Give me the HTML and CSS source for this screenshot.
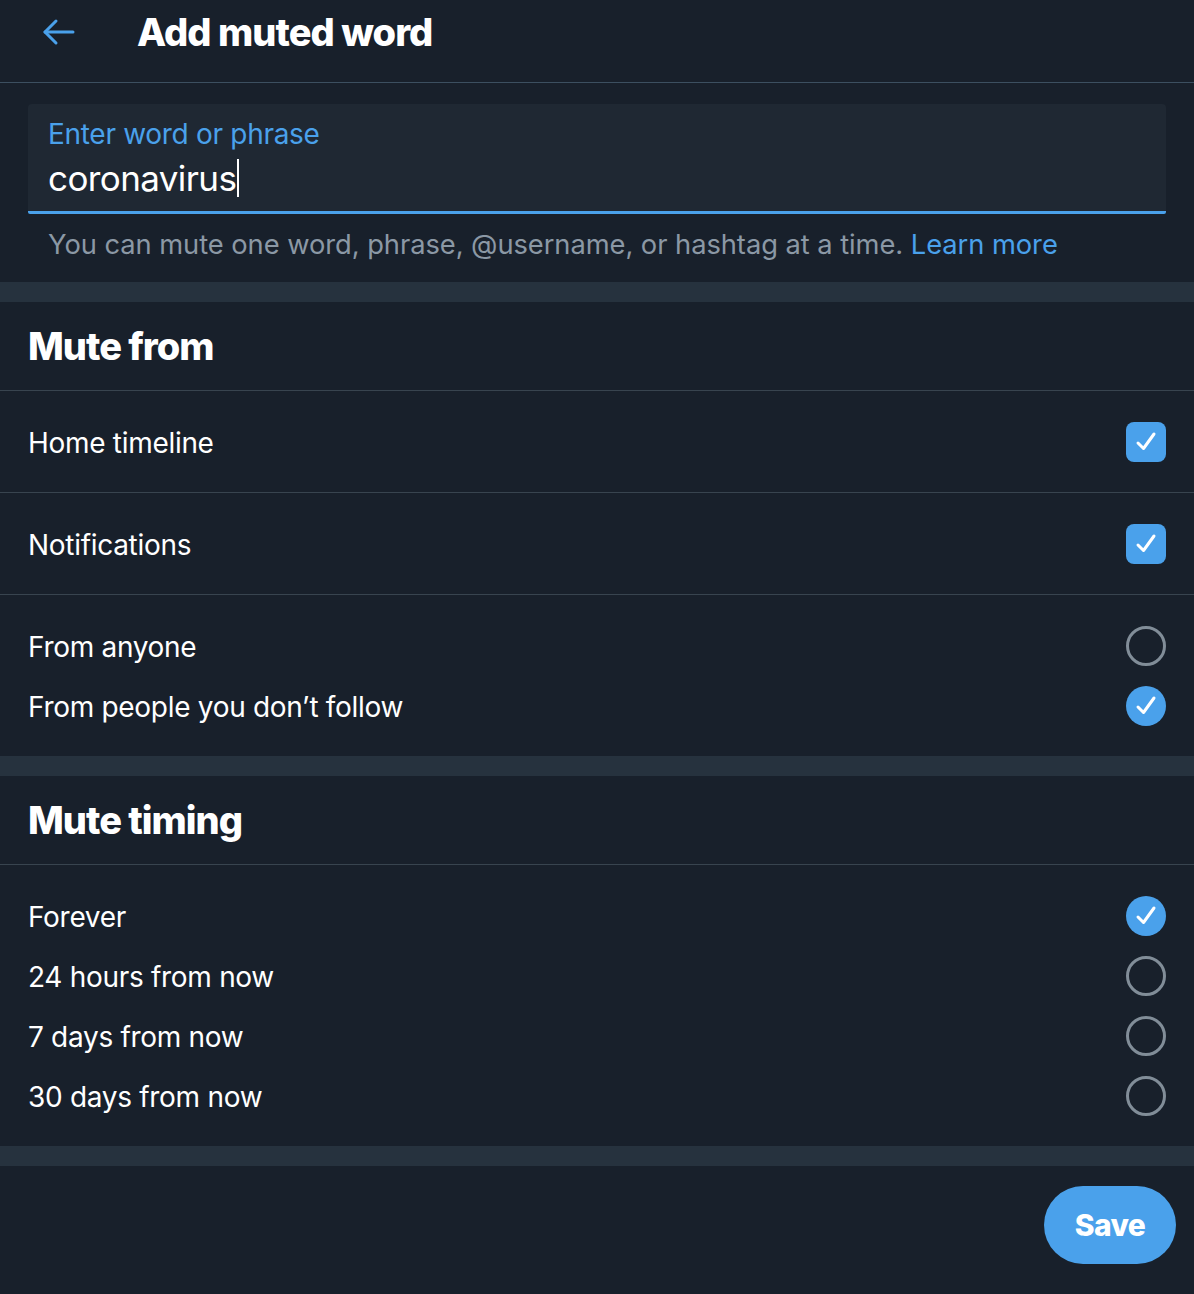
FILE: index.html
```html
<!DOCTYPE html>
<html lang="en">
<head>
<meta charset="utf-8">
<title>Add muted word</title>
<link rel="stylesheet" href="styles.css">
</head>
<body>
<div class="page">
  <header class="topbar">
    <button class="back" aria-label="Back">
      <svg width="34" height="28" viewBox="0 0 34 28" fill="none" stroke="#4aa1eb" stroke-width="3" stroke-linecap="round" stroke-linejoin="round">
        <path d="M31 14H3"/>
        <path d="M14 3L3 14L14 25"/>
      </svg>
    </button>
    <h1 class="title">Add muted word</h1>
  </header>

  <section class="input-section">
    <div class="field">
      <div class="field-label">Enter word or phrase</div>
      <div class="field-value">coronavirus<span class="caret"></span></div>
    </div>
    <p class="help">You can mute one word, phrase, @username, or hashtag at a time. <a class="link" href="#">Learn more</a></p>
  </section>

  <div class="band"></div>

  <h2 class="section-title">Mute from</h2>

  <div class="row row-bordered">
    <span class="label">Home timeline</span>
    <span class="check"><svg width="40" height="40" viewBox="0 0 40 40"><path d="M12 21L17.5 26.5L28 12" fill="none" stroke="#fff" stroke-width="3" stroke-linecap="round" stroke-linejoin="round"/></svg></span>
  </div>
  <div class="row row-bordered">
    <span class="label">Notifications</span>
    <span class="check"><svg width="40" height="40" viewBox="0 0 40 40"><path d="M12 21L17.5 26.5L28 12" fill="none" stroke="#fff" stroke-width="3" stroke-linecap="round" stroke-linejoin="round"/></svg></span>
  </div>

  <div class="group">
    <div class="opt">
      <span class="label">From anyone</span>
      <span class="radio"></span>
    </div>
    <div class="opt">
      <span class="label">From people you don’t follow</span>
      <span class="radio radio-on"><svg width="40" height="40" viewBox="0 0 40 40"><path d="M12 21L17.5 26.5L28 12" fill="none" stroke="#fff" stroke-width="3" stroke-linecap="round" stroke-linejoin="round"/></svg></span>
    </div>
  </div>

  <div class="band"></div>

  <h2 class="section-title">Mute timing</h2>

  <div class="group">
    <div class="opt">
      <span class="label">Forever</span>
      <span class="radio radio-on"><svg width="40" height="40" viewBox="0 0 40 40"><path d="M12 21L17.5 26.5L28 12" fill="none" stroke="#fff" stroke-width="3" stroke-linecap="round" stroke-linejoin="round"/></svg></span>
    </div>
    <div class="opt">
      <span class="label">24 hours from now</span>
      <span class="radio"></span>
    </div>
    <div class="opt">
      <span class="label">7 days from now</span>
      <span class="radio"></span>
    </div>
    <div class="opt">
      <span class="label">30 days from now</span>
      <span class="radio"></span>
    </div>
  </div>

  <div class="band"></div>

  <footer class="footer">
    <button class="save">Save</button>
  </footer>
</div>
</body>
</html>
```

FILE: styles.css
```css
* { box-sizing: border-box; }

html, body {
  margin: 0;
  padding: 0;
  background: #18202b;
}

body {
  font-family: Inter, "Noto Sans", "Liberation Sans", sans-serif;
  color: #ffffff;
  -webkit-font-smoothing: antialiased;
}

.page {
  width: 1194px;
  min-height: 1294px;
  background: #18202b;
}

.topbar {
  height: 83px;
  display: flex;
  align-items: center;
  border-bottom: 1px solid #3c4f60;
  padding-bottom: 18px;
}

.back {
  background: none;
  border: 0;
  padding: 0;
  margin-left: 42px;
  width: 34px;
  height: 28px;
  display: flex;
  cursor: pointer;
}

.title {
  margin: 0 0 0 61px;
  font-size: 38px;
  font-weight: 800;
  letter-spacing: -0.95px;
  line-height: 1;
}

.input-section {
  padding: 21px 28px 0;
  height: 199px;
}

.field {
  height: 110px;
  background: #1f2833;
  border-bottom: 3px solid #4aa1eb;
  border-radius: 4px 4px 2px 2px;
  padding: 13px 20px 0;
}

.field-label {
  color: #4aa1eb;
  font-size: 28px;
  line-height: 34px;
  letter-spacing: -0.3px;
}

.field-value {
  font-size: 35px;
  line-height: 46px;
  letter-spacing: -0.6px;
  display: flex;
  align-items: center;
  margin-top: 4px;
}

.caret {
  display: inline-block;
  width: 2px;
  height: 38px;
  background: #ffffff;
  margin-left: 1px;
}

.help {
  margin: 14px 0 0 20px;
  color: #8b98a5;
  font-size: 27.3px;
  line-height: 34px;
  letter-spacing: -0.05px;
}

.link {
  color: #4aa1eb;
  text-decoration: none;
}

.band {
  height: 20px;
  background: #26323e;
}

.section-title {
  margin: 0;
  height: 89px;
  padding: 0 28px;
  display: flex;
  align-items: center;
  font-size: 38px;
  font-weight: 800;
  letter-spacing: -1px;
  border-bottom: 1px solid #38444f;
}

.row {
  height: 102px;
  display: flex;
  align-items: center;
  justify-content: space-between;
  padding: 2px 28px 0;
}

.row-bordered {
  border-bottom: 1px solid #38444f;
}

.label {
  font-size: 28px;
  letter-spacing: -0.3px;
}

.opt .label {
  padding-top: 2px;
}

.row .check {
  margin-top: -2px;
}

.check {
  width: 40px;
  height: 40px;
  border-radius: 8px;
  background: #4aa1eb;
  display: flex;
}

.group {
  padding: 21px 28px 20px;
}

.opt {
  height: 60px;
  display: flex;
  align-items: center;
  justify-content: space-between;
}

.radio {
  width: 40px;
  height: 40px;
  border-radius: 50%;
  border: 3px solid #818d98;
  display: flex;
  align-items: center;
  justify-content: center;
}

.radio-on {
  border: 0;
  background: #4aa1eb;
}

.footer {
  display: flex;
  justify-content: flex-end;
  padding: 20px 18px 0 0;
}

.save {
  width: 132px;
  height: 78px;
  border-radius: 39px;
  border: 0;
  background: #4aa1eb;
  color: #ffffff;
  font-family: Inter, "Noto Sans", "Liberation Sans", sans-serif;
  font-size: 30px;
  font-weight: 800;
  letter-spacing: -0.6px;
  cursor: pointer;
}
```
